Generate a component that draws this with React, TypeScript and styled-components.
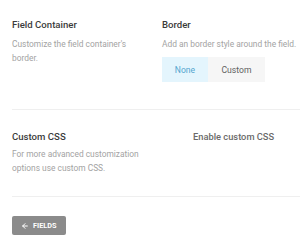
import styled, { createGlobalStyle } from "styled-components";
import { ArrowLeft } from "lucide-react";

const GlobalStyle = createGlobalStyle`
  body {
    margin: 0;
    background: #ffffff;
    font-family: Roboto, "Liberation Sans", sans-serif;
  }
`;

const Page = styled.div`
  width: 300px;
  height: 252px;
  overflow: hidden;
  background: #fff;
`;

const Section = styled.div<{ $top: number; $bottom: number }>`
  display: grid;
  grid-template-columns: 150px 150px;
  padding: ${(p) => p.$top}px 0 ${(p) => p.$bottom}px;
`;

const Column = styled.div<{ $indent?: number }>`
  padding-left: ${(p) => p.$indent ?? 12}px;
`;

const Title = styled.div`
  font-size: 9.6px;
  font-weight: 500;
  line-height: 16px;
  color: #3b3b3b;
`;

const Description = styled.div<{ $gap: number }>`
  margin-top: ${(p) => p.$gap}px;
  font-size: 8.4px;
  line-height: 14px;
  color: #a3a3a3;
`;

const ToggleLabel = styled.div`
  font-size: 9.3px;
  font-weight: 500;
  line-height: 16px;
  color: #6a6a6a;
`;

const Segmented = styled.div`
  display: flex;
  margin-top: 6px;
`;

const Segment = styled.button<{ $active?: boolean; $w: number }>`
  width: ${(p) => p.$w}px;
  height: 25px;
  border: none;
  padding: 0;
  font-family: inherit;
  font-size: 8.6px;
  background: ${(p) => (p.$active ? "#e4f5fd" : "#f6f6f6")};
  color: ${(p) => (p.$active ? "#55a6cf" : "#5f5f5f")};
`;

const Divider = styled.div`
  height: 1px;
  margin-left: 12px;
  background: #efefef;
`;

const Footer = styled.div`
  padding: 19px 12px 0;
`;

const BackButton = styled.button`
  display: flex;
  align-items: center;
  gap: 4px;
  width: 54px;
  height: 19px;
  padding: 0 0 0 9px;
  border: none;
  border-radius: 2px;
  background: #8b8b8b;
  color: #fff;
  font-family: inherit;
  font-size: 7.3px;
  font-weight: 700;
`;

export default function App() {
  return (
    <Page>
      <GlobalStyle />
      <Section $top={17} $bottom={27}>
        <Column>
          <Title>Field Container</Title>
          <Description $gap={4}>Customize the field container's border.</Description>
        </Column>
        <Column>
          <Title>Border</Title>
          <Description $gap={4}>Add an border style around the field.</Description>
          <Segmented>
            <Segment $active $w={46}>None</Segment>
            <Segment $w={57}>Custom</Segment>
          </Segmented>
        </Column>
      </Section>
      <Divider />
      <Section $top={19} $bottom={21}>
        <Column>
          <Title>Custom CSS</Title>
          <Description $gap={2}>For more advanced customization options use custom CSS.</Description>
        </Column>
        <Column $indent={43}>
          <ToggleLabel>Enable custom CSS</ToggleLabel>
        </Column>
      </Section>
      <Divider />
      <Footer>
        <BackButton>
          <ArrowLeft size={8} strokeWidth={3} />
          FIELDS
        </BackButton>
      </Footer>
    </Page>
  );
}
